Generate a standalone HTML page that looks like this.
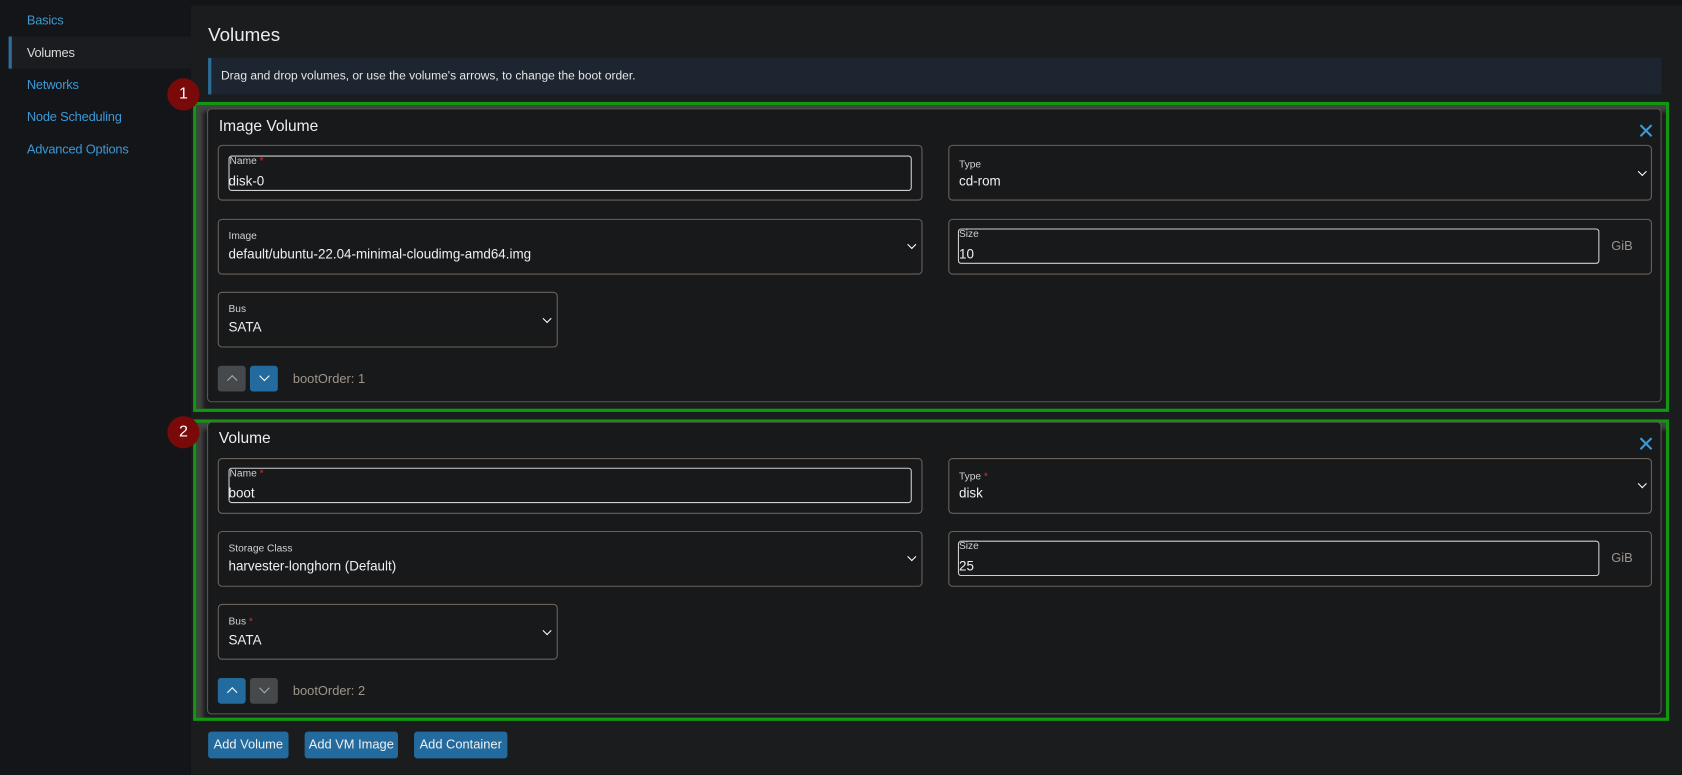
<!DOCTYPE html>
<html><head><style>
*{box-sizing:border-box;margin:0;padding:0}
body{width:1682px;height:774px;background:#141518;font-family:"Liberation Sans",sans-serif;position:relative;overflow:hidden;color:#e6e6e6}
#w{position:absolute;left:0;top:0;width:1568px;height:722px;transform:scale(1.07270);transform-origin:0 0}
.side{position:absolute;left:8px;top:0;width:170px;height:722px;background:#141518;padding-top:4px}
.side div{height:30px;line-height:30px;padding-left:17px;font-size:12px;color:#3d98d3;letter-spacing:-0.2px}
.side .act{background:#1b1c1f;color:#d8d8d8;border-left:3px solid #2f6e9a;padding-left:14px}
.main{position:absolute;left:178px;top:5px;width:1390px;height:717px;background:#1b1c1e}
.abs{position:absolute}
h1{position:absolute;left:194px;top:22px;font-size:17.5px;font-weight:normal;color:#ececec}
.info{left:194px;top:54px;width:1355px;height:34px;background:#1c2530;border-left:3px solid #2d6c98;font-size:11.2px;line-height:34px;padding-left:9px;color:#e4e4e4}
.green{left:180px;width:1376px;border:3px solid #129712;box-shadow:inset 6px 6px 4px #444}
.card{left:193px;width:1356px;border:1px solid #5e5750;border-radius:4px;background:#18191b}
.title{font-size:14.5px;color:#eee}
.x{color:#3d98d3;font-size:20px}
.field{border:1px solid #6b625a;border-radius:4px;background:#18191b}
.inp{border:1px solid #d0d0d0;border-radius:3px}
.lbl{font-size:9.5px;color:#d0d0d0}
.lbl b{color:#d43232;font-weight:normal}
.val{font-size:12.5px;color:#f0f0f0}
.chev{position:absolute;width:7px;height:7px;border-right:1.6px solid #fff;border-bottom:1.6px solid #fff;transform:rotate(45deg)}
.btn{border-radius:3px;width:26px;height:24px}
.blue{background:#236b9e}.grey{background:#45494c}
.bo{font-size:12px;color:#a0958a}
.ab{top:682px;height:25px;background:#236b9e;border-radius:3px;color:#f0f0f0;font-size:12px;line-height:25px;text-align:center}
.badge{width:30px;height:30px;border-radius:50%;background:#7a0a0a;color:#fff;font-size:15px;line-height:30px;text-align:center}
.gib{font-size:12px;color:#9a948c}
</style></head><body>
<div id="w">
<div class="side"><div>Basics</div><div class="act">Volumes</div><div>Networks</div><div>Node Scheduling</div><div>Advanced Options</div></div>
<div class="main"></div>
<h1>Volumes</h1>
<div class="abs info">Drag and drop volumes, or use the volume's arrows, to change the boot order.</div>

<div class="abs green" style="top:95px;height:289px"></div>
<div class="abs card" style="top:101px;height:274px"></div>
<div class="abs badge" style="left:156px;top:73px">1</div>
<div class="abs title" style="left:204px;top:110px">Image Volume</div>
<div class="abs x" style="left:1526px;top:110px">✕</div>
<div class="abs field" style="left:203px;top:135px;width:657px;height:52px"></div>
<div class="abs inp" style="left:213px;top:145px;width:637px;height:33px"></div>
<div class="abs lbl" style="left:214px;top:145px">Name <b>*</b></div>
<div class="abs val" style="left:213px;top:162px">disk-0</div>
<div class="abs field" style="left:884px;top:135px;width:656px;height:52px"></div>
<div class="abs lbl" style="left:894px;top:148px">Type</div>
<div class="abs val" style="left:894px;top:162px">cd-rom</div>
<div class="chev" style="left:1528px;top:157px;width:6px;height:6px"></div>
<div class="abs field" style="left:203px;top:204px;width:657px;height:52px"></div>
<div class="abs lbl" style="left:213px;top:215px">Image</div>
<div class="abs val" style="left:213px;top:230px">default/ubuntu-22.04-minimal-cloudimg-amd64.img</div>
<div class="chev" style="left:847px;top:225px;width:6px;height:6px"></div>
<div class="abs field" style="left:884px;top:204px;width:656px;height:52px"></div>
<div class="abs inp" style="left:893px;top:213px;width:598px;height:33px"></div>
<div class="abs lbl" style="left:894px;top:213px">Size</div>
<div class="abs val" style="left:894px;top:230px">10</div>
<div class="abs gib" style="left:1502px;top:222px">GiB</div>
<div class="abs field" style="left:203px;top:272px;width:317px;height:52px"></div>
<div class="abs lbl" style="left:213px;top:283px">Bus</div>
<div class="abs val" style="left:213px;top:298px">SATA</div>
<div class="chev" style="left:507px;top:294px;width:6px;height:6px"></div>
<div class="abs btn grey" style="left:203px;top:341px"></div><div class="chev" style="left:212.5px;top:351px;transform:rotate(-135deg);border-color:#aaa"></div>
<div class="abs btn blue" style="left:233px;top:341px"></div><div class="chev" style="left:242.5px;top:347px"></div>
<div class="abs bo" style="left:273px;top:346px">bootOrder: 1</div>

<div class="abs green" style="top:391px;height:281px"></div>
<div class="abs card" style="top:393px;height:273px"></div>
<div class="abs badge" style="left:156px;top:388px">2</div>
<div class="abs title" style="left:204px;top:401px">Volume</div>
<div class="abs x" style="left:1526px;top:402px">✕</div>
<div class="abs field" style="left:203px;top:427px;width:657px;height:52px"></div>
<div class="abs inp" style="left:213px;top:436px;width:637px;height:33px"></div>
<div class="abs lbl" style="left:214px;top:436px">Name <b>*</b></div>
<div class="abs val" style="left:213px;top:453px">boot</div>
<div class="abs field" style="left:884px;top:427px;width:656px;height:52px"></div>
<div class="abs lbl" style="left:894px;top:439px">Type <b>*</b></div>
<div class="abs val" style="left:894px;top:453px">disk</div>
<div class="chev" style="left:1528px;top:448px;width:6px;height:6px"></div>
<div class="abs field" style="left:203px;top:495px;width:657px;height:52px"></div>
<div class="abs lbl" style="left:213px;top:506px">Storage Class</div>
<div class="abs val" style="left:213px;top:521px">harvester-longhorn (Default)</div>
<div class="chev" style="left:847px;top:516px;width:6px;height:6px"></div>
<div class="abs field" style="left:884px;top:495px;width:656px;height:52px"></div>
<div class="abs inp" style="left:893px;top:504px;width:598px;height:33px"></div>
<div class="abs lbl" style="left:894px;top:504px">Size</div>
<div class="abs val" style="left:894px;top:521px">25</div>
<div class="abs gib" style="left:1502px;top:513px">GiB</div>
<div class="abs field" style="left:203px;top:563px;width:317px;height:52px"></div>
<div class="abs lbl" style="left:213px;top:574px">Bus <b>*</b></div>
<div class="abs val" style="left:213px;top:590px">SATA</div>
<div class="chev" style="left:507px;top:585px;width:6px;height:6px"></div>
<div class="abs btn blue" style="left:203px;top:632px"></div><div class="chev" style="left:212.5px;top:642px;transform:rotate(-135deg)"></div>
<div class="abs btn grey" style="left:233px;top:632px"></div><div class="chev" style="left:242.5px;top:638px;border-color:#aaa"></div>
<div class="abs bo" style="left:273px;top:637px">bootOrder: 2</div>

<div class="abs ab" style="left:194px;width:75px">Add Volume</div>
<div class="abs ab" style="left:284px;width:87px">Add VM Image</div>
<div class="abs ab" style="left:386px;width:87px">Add Container</div>
</div>
</body></html>
